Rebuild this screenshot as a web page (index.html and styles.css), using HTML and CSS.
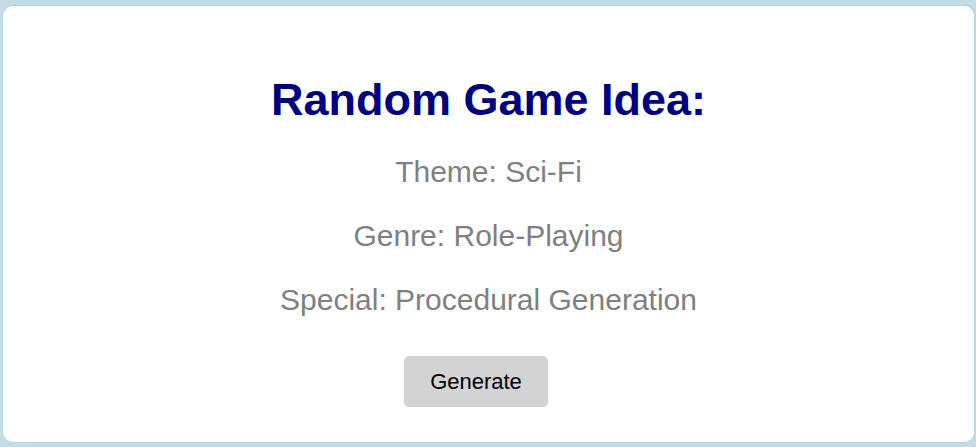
FILE: index.html
```html
<!DOCTYPE html>
<html lang="en">
<head>
<meta charset="utf-8">
<title>Random Game Idea</title>
<link rel="stylesheet" href="styles.css">
</head>
<body>
<main class="card">
  <h1 class="title">Random Game Idea:</h1>
  <p class="line">Theme: Sci-Fi</p>
  <p class="line">Genre: Role-Playing</p>
  <p class="line line-last">Special: Procedural Generation</p>
  <button class="btn" type="button">Generate</button>
</main>
</body>
</html>
```

FILE: styles.css
```css
html, body {
  margin: 0;
  padding: 0;
  height: 100%;
}
body {
  background: #c4dce5;
  font-family: "Liberation Sans", Arial, sans-serif;
  padding: 6px 2px 5px 3px;
  box-sizing: border-box;
}
.card {
  box-sizing: border-box;
  height: 100%;
  background: #ffffff;
  border-radius: 10px;
  box-shadow: 0 0 3px rgba(0, 0, 0, 0.08);
  display: flex;
  flex-direction: column;
  align-items: center;
  padding-top: 68px;
}
.title {
  margin: 0 0 29px;
  font-size: 45px;
  font-weight: bold;
  color: #000080;
}
.line {
  margin: 0 0 30px;
  font-size: 30px;
  color: #808080;
}
.line-last {
  margin-bottom: 38.5px;
}
.btn {
  font-family: "Liberation Sans", Arial, sans-serif;
  font-size: 22px;
  color: #000;
  background: #d3d3d3;
  border: none;
  border-radius: 5px;
  padding: 13px 26px;
  margin-right: 25px;
  height: 51px;
}
```
